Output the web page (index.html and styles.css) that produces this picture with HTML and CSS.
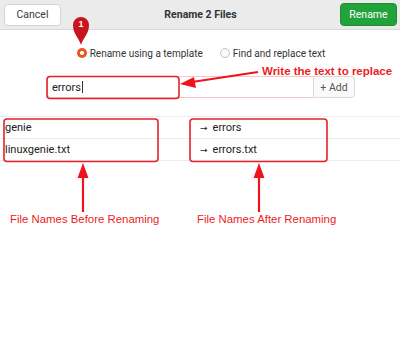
FILE: index.html
```html
<!DOCTYPE html>
<html>
<head>
<meta charset="utf-8">
<link rel="stylesheet" href="styles.css">
</head>
<body>
<div class="page">
  <header class="bar">
    <button class="btn cancel">Cancel</button>
    <div class="title">Rename 2 Files</div>
    <button class="btn rename">Rename</button>
  </header>

  <div class="modes">
    <label class="mode"><span class="radio on"></span>Rename using a template</label>
    <label class="mode"><span class="radio"></span>Find and replace text</label>
  </div>

  <div class="entry-row">
    <div class="entry"><span>errors</span><span class="caret"></span></div>
    <button class="add">+ Add</button>
  </div>

  <div class="list">
    <div class="row"><div class="old">genie</div><div class="new"><span class="arr">→</span>errors</div></div>
    <div class="row"><div class="old">linuxgenie.txt</div><div class="new"><span class="arr">→</span>errors.txt</div></div>
  </div>

  <svg class="overlay" width="400" height="337" viewBox="0 0 400 337">
    <g fill="none" stroke="#e3222b" stroke-width="1.6">
      <rect x="47" y="76.5" width="132" height="22" rx="3"/>
      <rect x="4" y="119" width="154" height="42.5" rx="3"/>
      <rect x="190" y="119" width="137" height="42.5" rx="3"/>
    </g>
    <g fill="#f0121d" stroke="#f0121d">
      <line x1="258" y1="72" x2="192" y2="82" stroke-width="2.2"/>
      <polygon points="180,84 194,77 196,88" stroke="none"/>
      <line x1="83" y1="176" x2="83" y2="212" stroke-width="2.2"/>
      <polygon points="83,163 77.5,178 88.5,178" stroke="none"/>
      <line x1="259" y1="176" x2="259" y2="212" stroke-width="2.2"/>
      <polygon points="259,163 253.5,178 264.5,178" stroke="none"/>
    </g>
    <path d="M81 45 C79 38 73 34 73 25 A8 8 0 0 1 89 25 C89 34 83 38 81 45 Z" fill="#c9141d"/>
  </svg>
  <div class="pin-num">1</div>
  <div class="note note-write">Write the text to replace</div>
  <div class="note note-before">File Names Before Renaming</div>
  <div class="note note-after">File Names After Renaming</div>
</div>
</body>
</html>
```

FILE: styles.css
```css
* { box-sizing: border-box; }
html, body { margin: 0; padding: 0; background: #ffffff; }
.page {
  position: relative;
  width: 400px;
  height: 337px;
  overflow: hidden;
  font-family: Roboto, "Noto Sans", sans-serif;
  font-size: 10.5px;
  color: #2e2e2e;
}
.bar {
  height: 30px;
  display: flex;
  align-items: center;
  justify-content: space-between;
  padding: 0 3px 0 4px;
  background: #ebebeb;
  border-bottom: 1px solid #d9d9d9;
}
.btn {
  font-family: inherit;
  font-size: 10.5px;
  height: 22px;
  border-radius: 4px;
  padding: 0;
}
.cancel {
  width: 57px;
  background: #ffffff;
  border: 1px solid #d4d4d4;
  color: #3a3a3a;
}
.title {
  font-weight: bold;
  color: #333;
}
.rename {
  width: 57px;
  height: 23px;
  background: #22a23b;
  border: 1px solid #1c8f33;
  color: #ffffff;
}
.modes {
  display: flex;
  justify-content: center;
  gap: 17px;
  margin-top: 16px;
  height: 14px;
  align-items: center;
  padding-left: 2px;
  font-size: 10px;
}
.mode {
  display: flex;
  align-items: center;
  gap: 3px;
  color: #333;
}
.radio {
  width: 10px;
  height: 10px;
  border-radius: 50%;
  border: 1px solid #c4c4c4;
  background: #fafafa;
}
.radio.on {
  border: none;
  background: radial-gradient(circle, #ffffff 0 1.8px, #e95420 2.3px);
}
.entry-row {
  display: flex;
  justify-content: center;
  margin-top: 16px;
  padding-left: 2px;
}
.entry {
  width: 266px;
  height: 22px;
  border: 1px solid #f0c8c8;
  border-right: none;
  border-radius: 4px 0 0 4px;
  display: flex;
  align-items: center;
  padding-left: 4px;
  color: #222;
  background: #fff;
  font-size: 11px;
}
.caret {
  width: 1px;
  height: 12px;
  background: #333;
  margin-left: 1px;
}
.add {
  width: 42px;
  height: 22px;
  font-family: inherit;
  font-size: 10.5px;
  background: #fafafa;
  border: 1px solid #dadada;
  border-radius: 0 4px 4px 0;
  color: #555;
  padding: 0;
}
.list {
  margin-top: 18px;
  border-top: 1px solid #ececec;
  font-size: 11px;
}
.row {
  display: flex;
  height: 22px;
  align-items: center;
  border-bottom: 1px solid #ececec;
}
.old {
  width: 195px;
  padding-left: 5px;
  color: #222;
}
.new {
  padding-left: 5px;
  color: #222;
}
.arr {
  font-family: "DejaVu Sans", sans-serif;
  font-size: 9px;
  margin-right: 5px;
}
.overlay {
  position: absolute;
  left: 0;
  top: 0;
}
.pin-num {
  position: absolute;
  left: 77px;
  top: 19px;
  width: 8px;
  text-align: center;
  color: #fff;
  font-size: 9px;
  font-weight: bold;
  font-family: "Liberation Sans", sans-serif;
}
.note {
  position: absolute;
  font-family: "Liberation Sans", Arial, sans-serif;
  color: #ee1c25;
  white-space: nowrap;
}
.note-write {
  left: 262px;
  top: 65px;
  font-weight: bold;
  font-size: 11.5px;
}
.note-before {
  left: 10px;
  top: 213px;
  font-size: 11.4px;
}
.note-after {
  left: 197px;
  top: 213px;
  font-size: 11.4px;
}
```
